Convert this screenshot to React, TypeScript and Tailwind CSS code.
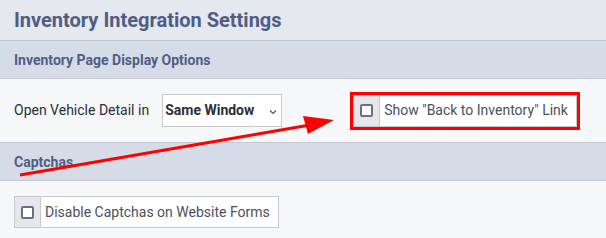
import React from "react";

function CheckGroup({ label }: { label: string }) {
  return (
    <div className="flex h-[32px] w-fit border border-[#c6c8cc] bg-white">
      <div className="flex w-[26px] items-center justify-center border-r border-[#c6c8cc] bg-[#e5e7eb]">
        <div className="h-[13px] w-[13px] rounded-[2px] border-2 border-[#6e6e82] bg-white" />
      </div>
      <div className="flex items-center whitespace-nowrap pl-[4px] pr-[8px] text-[14px] text-[#4b505b]">{label}</div>
    </div>
  );
}

export default function App() {
  return (
    <div
      className="relative h-[238px] w-[606px] overflow-hidden bg-[#f6f7f9]"
      style={{ fontFamily: "Roboto, 'Liberation Sans', sans-serif" }}
    >
      <div className="flex h-[41px] items-center border-b border-[#c3c8d0] bg-[#e5e8ed] px-[14px]">
        <h1 className="text-[20px] font-bold text-[#4f5d86]">Inventory Integration Settings</h1>
      </div>
      <div className="flex h-[38px] items-center border-b border-[#c3c8d0] bg-[#d5dce8] px-[14px]">
        <h2 className="mt-[1px] text-[14px] font-bold text-[#4f5d86]">Inventory Page Display Options</h2>
      </div>
      <div className="flex h-[64px] items-center border-b border-[#c3c8d0] px-[14px]">
        <span className="mr-[13px] whitespace-nowrap text-[14px] text-[#2b2f36]">Open Vehicle Detail in</span>
        <div className="flex h-[33px] w-[120px] shrink-0 items-center justify-between border border-[#c6c8cc] bg-white pl-[2px] pr-[4px]">
          <span className="whitespace-nowrap text-[14px] font-bold text-[#2b2f36]">Same Window</span>
          <svg width="8" height="6" viewBox="0 0 8 6" className="mt-[2px]">
            <path d="M1 1.5 L4 4.5 L7 1.5" fill="none" stroke="#555" strokeWidth="1.2" />
          </svg>
        </div>
        <div className="ml-[68px] shrink-0 border-[3px] border-[#ff0000]">
          <CheckGroup label={'Show "Back to Inventory" Link'} />
        </div>
      </div>
      <div className="flex h-[38px] items-center border-b border-[#c3c8d0] bg-[#d5dce8] px-[14px]">
        <h2 className="mt-[1px] text-[14px] font-bold text-[#4f5d86]">Captchas</h2>
      </div>
      <div className="px-[14px] pt-[15px]">
        <CheckGroup label="Disable Captchas on Website Forms" />
      </div>
      <svg className="pointer-events-none absolute left-0 top-0" width="606" height="238">
        <line x1="20" y1="175" x2="310" y2="125" stroke="#ff0000" strokeWidth="3" />
        <polygon points="334,120 303,116 308,134" fill="#ff0000" />
      </svg>
    </div>
  );
}
